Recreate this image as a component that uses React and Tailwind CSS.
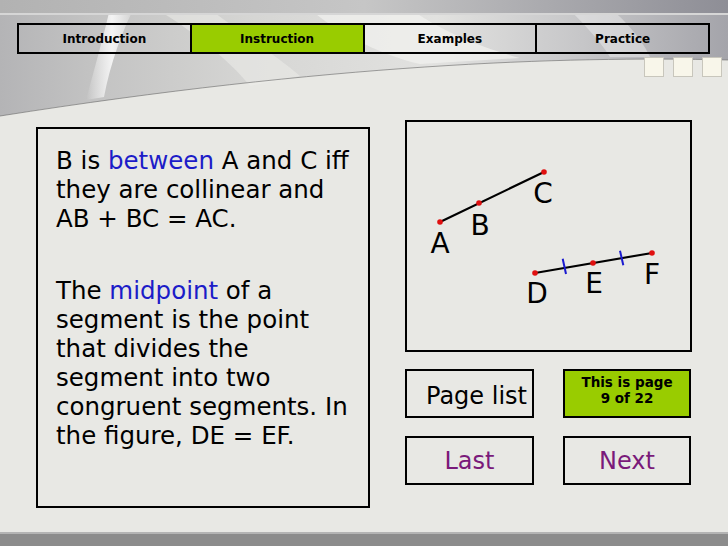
import React from 'react';

const tabs = ['Introduction', 'Instruction', 'Examples', 'Practice'];

// swoosh graphic behind the tab bar
function Backdrop() {
  return (
    <svg className="absolute left-0 top-0" width="728" height="130" viewBox="0 0 728 130">
      <defs>
        <linearGradient id="topfill" x1="0" y1="0" x2="1" y2="0">
          <stop offset="0" stopColor="#b4b4b6" />
          <stop offset="0.12" stopColor="#c2c2c2" />
          <stop offset="0.35" stopColor="#d6d6d4" />
          <stop offset="0.6" stopColor="#e2e2e0" />
          <stop offset="0.8" stopColor="#c6c6c8" />
          <stop offset="1" stopColor="#a4a4aa" />
        </linearGradient>
        <linearGradient id="band" x1="0" y1="0" x2="1" y2="0">
          <stop offset="0" stopColor="#b2b2b2" />
          <stop offset="0.5" stopColor="#c6c6c6" />
          <stop offset="1" stopColor="#8e8e96" />
        </linearGradient>
        <linearGradient id="streak" x1="0" y1="0" x2="1" y2="0">
          <stop offset="0" stopColor="#ffffff" stopOpacity="0" />
          <stop offset="0.5" stopColor="#f6f6f6" stopOpacity="0.95" />
          <stop offset="1" stopColor="#ffffff" stopOpacity="0" />
        </linearGradient>
      </defs>
      <path d="M0 0 H728 V60 C 560 56 330 64 0 116 Z" fill="url(#topfill)" />
      <path d="M112 0 C 104 35 94 70 86 100 L 104 97 C 110 65 122 30 138 0 Z" fill="url(#streak)" />
      <path d="M140 0 C 180 20 230 60 250 86 L 300 76 C 270 50 220 20 200 0 Z" fill="#ececea" opacity="0.55" />
      <path d="M300 0 C 330 30 380 55 420 64 L 520 58 C 470 45 420 20 400 0 Z" fill="#f2f2f0" opacity="0.7" />
      <path d="M560 0 C 580 20 600 40 610 57 L 650 57 C 640 35 620 15 600 0 Z" fill="#ffffff" opacity="0.35" />
      <rect x="0" y="0" width="728" height="13" fill="url(#band)" />
      <rect x="0" y="13" width="728" height="2" fill="#d6d6d6" />
      <path d="M0 116 C 330 64 560 56 728 60" fill="none" stroke="#666" strokeWidth="1" opacity="0.6" />
    </svg>
  );
}

function Figure() {
  return (
    <svg width="283" height="228" viewBox="0 0 283 228" className="block">
      <g stroke="#000" strokeWidth="2.2" strokeLinecap="round">
        <line x1="33" y1="100" x2="137" y2="50" />
        <line x1="128" y1="151" x2="245" y2="131" />
      </g>
      <g stroke="#1a1ad0" strokeWidth="2">
        <line x1="155.7" y1="136.7" x2="159" y2="152" />
        <line x1="213" y1="128.7" x2="216.3" y2="143.3" />
      </g>
      <g className="fill-[#e01010]">
        <circle cx="33" cy="100" r="2.8" />
        <circle cx="72" cy="81" r="2.8" />
        <circle cx="137" cy="50" r="2.8" />
        <circle cx="128" cy="151" r="2.8" />
        <circle cx="186" cy="141" r="2.8" />
        <circle cx="245" cy="131" r="2.8" />
      </g>
      <g fontFamily="'DejaVu Sans', sans-serif" fontSize="28" textAnchor="middle" fill="#000">
        <text x="33" y="131">A</text>
        <text x="73" y="113">B</text>
        <text x="136" y="81">C</text>
        <text x="130" y="181">D</text>
        <text x="187" y="171">E</text>
        <text x="245" y="162">F</text>
      </g>
    </svg>
  );
}

export default function App() {
  return (
    <div className="relative w-[728px] h-[546px] overflow-hidden bg-[#e8e8e4] font-['DejaVu_Sans',sans-serif] text-black">
      <Backdrop />

      <div className="relative flex flex-col">
        {/* Tab bar */}
        <div className="mt-[23px] ml-[17px] w-[693px] h-[31px] flex border-2 border-black">
          {tabs.map((tab, i) => (
            <div
              key={tab}
              className={`flex-1 flex items-center justify-center text-[12px] font-bold ${i > 0 ? 'border-l-2 border-black' : ''} ${i === 1 ? 'bg-[#99cc00]' : ''}`}
            >
              {tab}
            </div>
          ))}
        </div>

        <div className="mt-[3px] mr-[6px] flex justify-end gap-[9px]">
          <div className="w-[20px] h-[20px] bg-[#f8f6ea] border border-[#c8c6bc]" />
          <div className="w-[20px] h-[20px] bg-[#f8f6ea] border border-[#c8c6bc]" />
          <div className="w-[20px] h-[20px] bg-[#f8f6ea] border border-[#c8c6bc]" />
        </div>

        {/* Main content */}
        <div className="mt-[43px] ml-[36px] flex items-start gap-[35px]">
          <div className="mt-[7px] w-[334px] h-[381px] border-2 border-black pt-[17px] pl-[18px] text-[24.5px] leading-[29px] whitespace-nowrap">
            <p>
              B is <span className="text-[#1c1cc8]">between</span> A and C iff
              <br />
              they are collinear and
              <br />
              AB + BC = AC.
            </p>
            <p className="mt-[43px]">
              The <span className="text-[#1c1cc8]">midpoint</span> of a
              <br />
              segment is the point
              <br />
              that divides the
              <br />
              segment into two
              <br />
              congruent segments. In
              <br />
              the figure, DE = EF.
            </p>
          </div>

          <div className="flex flex-col">
            <div className="w-[287px] h-[232px] border-2 border-black">
              <Figure />
            </div>

            <div className="mt-[17px] grid grid-cols-[129px_128px] gap-x-[29px] gap-y-[18px]">
              <div className="h-[49px] border-2 border-black flex items-center pt-[4px] pl-[19px] text-[24px]">
                Page list
              </div>
              <div className="h-[49px] border-2 border-black bg-[#99cc00] pt-[3px] text-center text-[13.5px] leading-[16px] font-bold">
                This is page
                <br />9 of 22
              </div>
              <div className="h-[49px] border-2 border-black flex items-center justify-center text-[24px] text-[#7a1a7a]">
                Last
              </div>
              <div className="h-[49px] border-2 border-black flex items-center justify-center text-[24px] text-[#7a1a7a]">
                Next
              </div>
            </div>
          </div>
        </div>
      </div>

      {/* bottom strip */}
      <div className="absolute left-0 bottom-0 w-full h-[14px] bg-[#8c8c8c] border-t-2 border-[#b4b4b4]" />
    </div>
  );
}
